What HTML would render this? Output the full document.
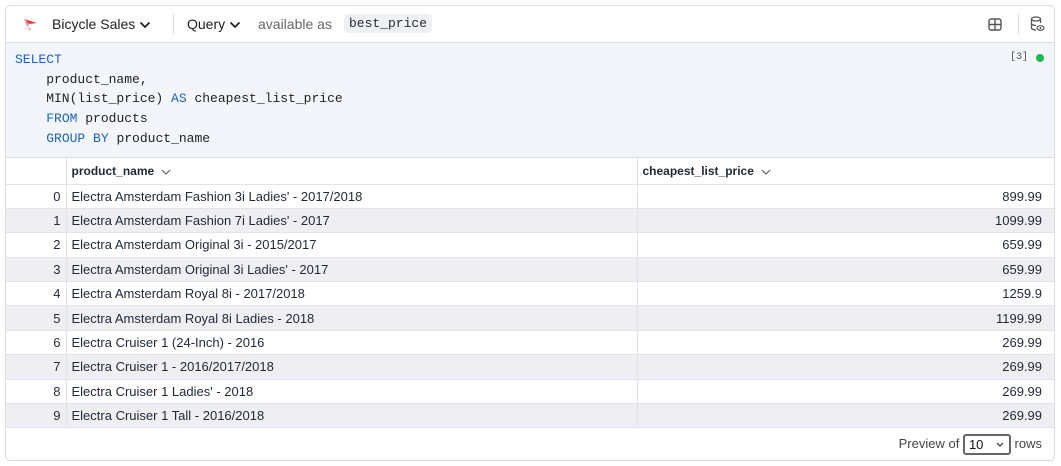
<!DOCTYPE html>
<html><head><style>
*{box-sizing:border-box;margin:0;padding:0}
body{width:1061px;height:466px;background:#fff;font-family:"Liberation Sans",sans-serif;color:#1f2937;position:relative;overflow:hidden}
.box{position:absolute;left:5px;top:5px;width:1050px;height:456px;border:1px solid #dcdde5;border-radius:5px;overflow:hidden}
.hdr{height:37px;border-bottom:1px solid #dcdde5;position:relative;font-size:14px}
.hdr span{position:absolute;top:10px}
.sql{height:115px;background:#f4f5fa;border-bottom:1px solid #dcdde5;font-family:"Liberation Mono",monospace;font-size:13px;line-height:19.7px;padding:7px 0 0 9px;color:#222;position:relative;white-space:pre}
.k{color:#1565c0}
table{border-collapse:collapse;width:100%;font-size:13px}
td{height:24.4px;border-bottom:1px solid #e2e3ea;padding:0 5px}
tr.o td{background:#eeeef3}
td.i{width:60px;text-align:right;border-right:1px solid #e2e3ea}
td.n{width:571px;border-right:1px solid #e2e3ea}
td.p{text-align:right;padding-right:12px}
th{height:26px;font-size:12px;text-align:left;padding-left:5px;border-bottom:1px solid #e2e3ea;font-weight:bold}
.ft{position:absolute;right:12px;bottom:5px;font-size:13px;color:#444}
.sel{display:inline-block;border:2px solid #666;border-radius:3px;width:48px;height:21px;padding-left:4px;vertical-align:middle;color:#111;position:relative;line-height:17px}
.chev{display:inline-block;vertical-align:middle;margin-left:4px}
</style></head><body>
<div class="box">
<div class="hdr">
<svg style="position:absolute;left:17px;top:11px" width="16" height="14"><path d="M1 2 L14 6 L6 7 Z" fill="#e53935"/><path d="M3 5 L7 13" stroke="#e57373" stroke-width="1.5"/><circle cx="4" cy="11" r="2.5" fill="#eee"/></svg>
<span style="left:46px;color:#222">Bicycle Sales<svg class="chev" width="12" height="8"><path d="M1.5 1.5L6 6L10.5 1.5" fill="none" stroke="#222" stroke-width="1.8"/></svg></span>
<div style="position:absolute;left:167px;top:8px;width:1px;height:20px;background:#dcdde5"></div>
<span style="left:181px;color:#222">Query<svg class="chev" width="12" height="8"><path d="M1.5 1.5L6 6L10.5 1.5" fill="none" stroke="#222" stroke-width="1.8"/></svg></span>
<span style="left:252px;color:#666">available as</span>
<span style="left:338px;top:8px;background:#eef0f4;border-radius:4px;padding:2px 5px;font-family:'Liberation Mono',monospace;font-size:13px">best_price</span>
<svg style="position:absolute;left:982px;top:12px" width="14" height="13"><rect x="1" y="1" width="12" height="11" rx="2" fill="none" stroke="#555" stroke-width="1.4"/><path d="M1 6.5H13M7 1V12" stroke="#555" stroke-width="1.4"/></svg>
<div style="position:absolute;left:1012px;top:8px;width:1px;height:20px;background:#dcdde5"></div>
<svg style="position:absolute;left:1024px;top:10px" width="15" height="16"><ellipse cx="6" cy="3" rx="4.5" ry="2" fill="none" stroke="#555" stroke-width="1.3"/><path d="M1.5 3V12c0 1 2 2 4.5 2M10.5 3V7M1.5 7.5c0 1 2 2 4.5 2" fill="none" stroke="#555" stroke-width="1.3"/><ellipse cx="10.5" cy="12" rx="3.5" ry="2.3" fill="#fff" stroke="#555" stroke-width="1.2"/><circle cx="10.5" cy="12" r="1" fill="#555"/></svg>
</div>
<div class="sql"><span class="k">SELECT</span>
    product_name,
    MIN(list_price) <span class="k">AS</span> cheapest_list_price
    <span class="k">FROM</span> products
    <span class="k">GROUP BY</span> product_name<span style="position:absolute;right:26px;top:5px;font-size:10px;color:#555">[3]</span><span style="position:absolute;right:10px;top:11px;width:8px;height:8px;border-radius:50%;background:#1db954"></span></div>
<table>
<tr><th style="width:60px;border-right:1px solid #e2e3ea"></th><th style="width:571px;border-right:1px solid #e2e3ea">product_name<svg class="chev" style="margin-left:7px" width="10" height="6"><path d="M1 1L5 5L9 1" fill="none" stroke="#666" stroke-width="1.2"/></svg></th><th>cheapest_list_price<svg class="chev" style="margin-left:7px" width="10" height="6"><path d="M1 1L5 5L9 1" fill="none" stroke="#666" stroke-width="1.2"/></svg></th></tr>
<tr><td class="i">0</td><td class="n">Electra Amsterdam Fashion 3i Ladies' - 2017/2018</td><td class="p">899.99</td></tr>
<tr class="o"><td class="i">1</td><td class="n">Electra Amsterdam Fashion 7i Ladies' - 2017</td><td class="p">1099.99</td></tr>
<tr><td class="i">2</td><td class="n">Electra Amsterdam Original 3i - 2015/2017</td><td class="p">659.99</td></tr>
<tr class="o"><td class="i">3</td><td class="n">Electra Amsterdam Original 3i Ladies' - 2017</td><td class="p">659.99</td></tr>
<tr><td class="i">4</td><td class="n">Electra Amsterdam Royal 8i - 2017/2018</td><td class="p">1259.9</td></tr>
<tr class="o"><td class="i">5</td><td class="n">Electra Amsterdam Royal 8i Ladies - 2018</td><td class="p">1199.99</td></tr>
<tr><td class="i">6</td><td class="n">Electra Cruiser 1 (24-Inch) - 2016</td><td class="p">269.99</td></tr>
<tr class="o"><td class="i">7</td><td class="n">Electra Cruiser 1 - 2016/2017/2018</td><td class="p">269.99</td></tr>
<tr><td class="i">8</td><td class="n">Electra Cruiser 1 Ladies' - 2018</td><td class="p">269.99</td></tr>
<tr class="o"><td class="i">9</td><td class="n">Electra Cruiser 1 Tall - 2016/2018</td><td class="p">269.99</td></tr>
</table>
<div class="ft">Preview of <span class="sel">10<svg style="position:absolute;right:5px;top:6px" width="8" height="5"><path d="M1 1L4 4L7 1" fill="none" stroke="#333" stroke-width="1.2"/></svg></span> rows</div>
</div>
</body></html>
